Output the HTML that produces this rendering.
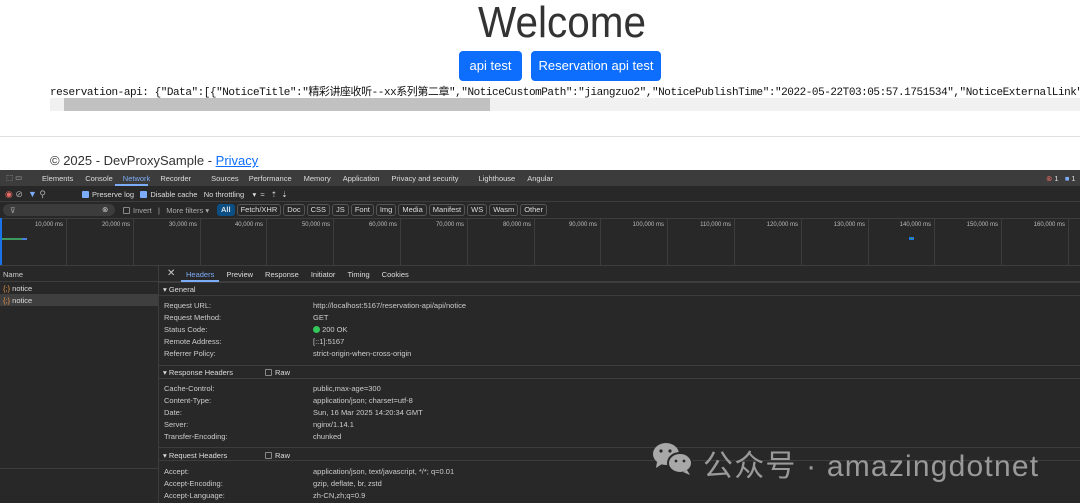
<!DOCTYPE html>
<html><head><meta charset="utf-8"><style>
*{margin:0;padding:0;box-sizing:border-box}
body{width:1080px;height:503px;overflow:hidden;position:relative;background:#fff;font-family:"Liberation Sans",sans-serif}
.a{position:absolute;white-space:nowrap}
.dt{position:absolute;left:0;top:170px;width:1080px;height:333px;background:#282828;color:#ddd;font-size:7.5px}
.d{position:absolute;white-space:nowrap}
.btn{position:absolute;background:#0d6efd;color:#fff;border-radius:4px;font-size:13px;text-align:center;line-height:30px;top:51px;height:30px}
.chip{display:inline-block;border:1px solid #555;border-radius:3px;padding:0 3px;height:12px;line-height:10px;margin-right:2px;color:#ddd}
.vl{position:absolute;top:48px;width:1px;height:47px;background:#3d3d3d}
.tl{position:absolute;top:52px;font-size:6px;color:#bbb;text-align:right;width:60px}
.k{position:absolute;left:164px;color:#ccc}
.v{position:absolute;left:313px;color:#ccc}
.sec{position:absolute;left:158px;width:922px;border-top:1px solid #3d3d3d;border-bottom:1px solid #3d3d3d;height:14px}
.cb{display:inline-block;width:7px;height:7px;border:1px solid #888;border-radius:1px;vertical-align:-1px;margin-right:3px}
.cbo{display:inline-block;width:7px;height:7px;background:#7cacf8;border-radius:1px;vertical-align:-1px;margin-right:3px}
</style></head><body>
<div class="a" style="left:478px;top:-2px;font-size:44px;font-weight:300;color:#333;transform:scaleX(0.92);transform-origin:left">Welcome</div>
<div class="btn" style="left:459px;width:63px">api test</div>
<div class="btn" style="left:531px;width:130px">Reservation api test</div>
<div class="a" style="left:50px;top:83px;font-family:'Liberation Mono','Noto Sans CJK SC',monospace;font-size:11px;color:#111;letter-spacing:-0.45px">reservation-api: {"Data":[{"NoticeTitle":"精彩讲座收听--xx系列第二章","NoticeCustomPath":"jiangzuo2","NoticePublishTime":"2022-05-22T03:05:57.1751534","NoticeExternalLink"</div>
<div class="a" style="left:50px;top:98px;width:1030px;height:13px;background:#f1f1f1"></div>
<div class="a" style="left:64px;top:98px;width:426px;height:13px;background:#c1c1c1"></div>
<div class="a" style="left:0;top:136px;width:1080px;height:1px;background:#e0e0e0"></div>
<div class="a" style="left:50px;top:153px;font-size:13px;color:#333">© 2025 - DevProxySample - <span style="color:#0d6efd;text-decoration:underline">Privacy</span></div>

<div class="dt">
 <div class="d" style="left:0;top:0;width:1080px;height:16px;background:#3c3c3c"></div>
 <div class="d" style="left:6px;top:3px;color:#aaa">⬚ ▭</div>
 <div class="d" style="left:42px;top:4px;word-spacing:0"><span style="margin-right:12px">Elements</span><span style="margin-right:10px">Console</span><span style="color:#7cacf8;margin-right:10px">Network</span><span style="margin-right:20px">Recorder</span><span style="margin-right:10px">Sources</span><span style="margin-right:12px">Performance</span><span style="margin-right:12px">Memory</span><span style="margin-right:12px">Application</span><span style="margin-right:20px">Privacy and security</span><span style="margin-right:12px">Lighthouse</span><span>Angular</span></div>
 <div class="d" style="left:115px;top:14px;width:33px;height:2px;background:#7cacf8"></div>
 <div class="d" style="left:1046px;top:4px"><span style="color:#e46962">⊗</span> 1 &nbsp;&nbsp;<span style="color:#7cacf8">■</span> 1</div>
 <div class="d" style="left:0;top:16px;width:1080px;height:16px;background:#282828;border-bottom:1px solid #3d3d3d"></div>
 <div class="d" style="left:5px;top:19px;font-size:9px"><span style="color:#e46962">◉</span> <span style="color:#aaa">⊘</span> &nbsp;<span style="color:#7cacf8">▼</span> <span style="color:#aaa">⚲</span></div>
 <div class="d" style="left:82px;top:20px"><span class="cbo"></span>Preserve log &nbsp;&nbsp;<span class="cbo"></span>Disable cache &nbsp;&nbsp;No throttling &nbsp;&nbsp;&nbsp;▾ &nbsp;≈ &nbsp;&nbsp;⇡ &nbsp;⇣</div>
 <div class="d" style="left:3px;top:34px;width:112px;height:12px;background:#3c3c3c;border-radius:6px"></div>
 <div class="d" style="left:10px;top:36px;color:#aaa">⊽</div>
 <div class="d" style="left:102px;top:35px;color:#ccc">⊗</div>
 <div class="d" style="left:123px;top:36px;color:#aaa"><span class="cb"></span>Invert &nbsp;&nbsp;|&nbsp;&nbsp; More filters ▾</div>
 <div class="d" style="left:217px;top:34px"><span class="chip" style="background:#0b4f84;border-color:#0b4f84;font-weight:bold">All</span><span class="chip">Fetch/XHR</span><span class="chip">Doc</span><span class="chip">CSS</span><span class="chip">JS</span><span class="chip">Font</span><span class="chip">Img</span><span class="chip">Media</span><span class="chip">Manifest</span><span class="chip">WS</span><span class="chip">Wasm</span><span class="chip">Other</span></div>
 <div class="d" style="left:0;top:48px;width:1080px;height:1px;background:#3d3d3d"></div>
 <div class="d" style="left:0;top:48px;width:2px;height:47px;background:#1a73e8"></div>
 <div class="d" style="left:2px;top:68px;width:20px;height:2px;background:#3c9a5f"></div>
 <div class="d" style="left:22px;top:68px;width:5px;height:2px;background:#4a7ee0"></div>
 <div class="d" style="left:909px;top:67px;width:5px;height:3px;background:#3c9a5f;border:1px solid #1a73e8"></div>
 <div class="vl" style="left:66px"></div><div class="vl" style="left:133px"></div><div class="vl" style="left:200px"></div><div class="vl" style="left:266px"></div><div class="vl" style="left:333px"></div><div class="vl" style="left:400px"></div><div class="vl" style="left:467px"></div><div class="vl" style="left:534px"></div><div class="vl" style="left:600px"></div><div class="vl" style="left:667px"></div><div class="vl" style="left:734px"></div><div class="vl" style="left:801px"></div><div class="vl" style="left:868px"></div><div class="vl" style="left:934px"></div><div class="vl" style="left:1001px"></div><div class="vl" style="left:1068px"></div>
 <div class="tl" style="left:3px">10,000 ms</div><div class="tl" style="left:70px">20,000 ms</div><div class="tl" style="left:137px">30,000 ms</div><div class="tl" style="left:203px">40,000 ms</div><div class="tl" style="left:270px">50,000 ms</div><div class="tl" style="left:337px">60,000 ms</div><div class="tl" style="left:404px">70,000 ms</div><div class="tl" style="left:471px">80,000 ms</div><div class="tl" style="left:537px">90,000 ms</div><div class="tl" style="left:604px">100,000 ms</div><div class="tl" style="left:671px">110,000 ms</div><div class="tl" style="left:738px">120,000 ms</div><div class="tl" style="left:805px">130,000 ms</div><div class="tl" style="left:871px">140,000 ms</div><div class="tl" style="left:938px">150,000 ms</div><div class="tl" style="left:1005px">160,000 ms</div>
 <div class="d" style="left:0;top:95px;width:1080px;height:1px;background:#3d3d3d"></div>
 <div class="d" style="left:0;top:96px;width:158px;height:16px;background:#282828;border-bottom:1px solid #3d3d3d"></div>
 <div class="d" style="left:3px;top:100px;color:#ccc">Name</div>
 <div class="d" style="left:158px;top:96px;width:1px;height:237px;background:#3d3d3d"></div>
 <div class="d" style="left:3px;top:114px"><span style="color:#e8934a">{;}</span> notice</div>
 <div class="d" style="left:0;top:124px;width:158px;height:12px;background:#3f3f3f"></div>
 <div class="d" style="left:3px;top:126px"><span style="color:#e8934a">{;}</span> notice</div>
 <div class="d" style="left:0;top:298px;width:158px;height:1px;background:#3d3d3d"></div>
 <div class="d" style="left:159px;top:96px;width:921px;height:16px;border-bottom:1px solid #3d3d3d"></div>
 <div class="d" style="left:167px;top:98px;font-size:10px;color:#ccc">✕</div>
 <div class="d" style="left:186px;top:100px"><span style="color:#7cacf8;margin-right:12px">Headers</span><span style="margin-right:12px">Preview</span><span style="margin-right:12px">Response</span><span style="margin-right:12px">Initiator</span><span style="margin-right:12px">Timing</span><span>Cookies</span></div>
 <div class="d" style="left:181px;top:110px;width:38px;height:2px;background:#7cacf8"></div>
 <div class="sec" style="top:112px"></div><div class="d" style="left:163px;top:115px">▾ General</div>
 <div class="k" style="top:131px">Request URL:</div><div class="v" style="top:131px">http://localhost:5167/reservation-api/api/notice</div>
 <div class="k" style="top:143px">Request Method:</div><div class="v" style="top:143px">GET</div>
 <div class="k" style="top:155px">Status Code:</div><div class="v" style="top:155px"><span style="display:inline-block;width:7px;height:7px;border-radius:50%;background:#34c759;vertical-align:-1px"></span> 200 OK</div>
 <div class="k" style="top:167px">Remote Address:</div><div class="v" style="top:167px">[::1]:5167</div>
 <div class="k" style="top:179px">Referrer Policy:</div><div class="v" style="top:179px">strict-origin-when-cross-origin</div>
 <div class="sec" style="top:195px"></div><div class="d" style="left:163px;top:198px">▾ Response Headers</div><div class="d" style="left:265px;top:198px"><span class="cb"></span>Raw</div>
 <div class="k" style="top:214px">Cache-Control:</div><div class="v" style="top:214px">public,max-age=300</div>
 <div class="k" style="top:226px">Content-Type:</div><div class="v" style="top:226px">application/json; charset=utf-8</div>
 <div class="k" style="top:238px">Date:</div><div class="v" style="top:238px">Sun, 16 Mar 2025 14:20:34 GMT</div>
 <div class="k" style="top:250px">Server:</div><div class="v" style="top:250px">nginx/1.14.1</div>
 <div class="k" style="top:262px">Transfer-Encoding:</div><div class="v" style="top:262px">chunked</div>
 <div class="sec" style="top:277px"></div><div class="d" style="left:163px;top:281px">▾ Request Headers</div><div class="d" style="left:265px;top:281px"><span class="cb"></span>Raw</div>
 <div class="k" style="top:297px">Accept:</div><div class="v" style="top:297px">application/json, text/javascript, */*; q=0.01</div>
 <div class="k" style="top:309px">Accept-Encoding:</div><div class="v" style="top:309px">gzip, deflate, br, zstd</div>
 <div class="k" style="top:321px">Accept-Language:</div><div class="v" style="top:321px">zh-CN,zh;q=0.9</div>
 <svg class="d" style="left:652px;top:271px" width="44" height="36" viewBox="0 0 44 36"><ellipse cx="14" cy="13" rx="13" ry="11" fill="#a8a8a8"/><path d="M5 21 L4 27 L10 23Z" fill="#a8a8a8"/><ellipse cx="28" cy="22" rx="12" ry="10" fill="#a8a8a8" stroke="#282828" stroke-width="2"/><path d="M35 29 L38 34 L31 31Z" fill="#a8a8a8"/><circle cx="9" cy="10" r="1.6" fill="#282828"/><circle cx="18" cy="10" r="1.6" fill="#282828"/><circle cx="24" cy="20" r="1.4" fill="#282828"/><circle cx="32" cy="20" r="1.4" fill="#282828"/></svg>
 <div class="d" style="left:703px;top:271px;font-size:30px;letter-spacing:1.2px;color:#9a9a9a;font-family:'Liberation Sans','Noto Sans CJK SC',sans-serif">公众号 · amazingdotnet</div>
</div>
</body></html>
